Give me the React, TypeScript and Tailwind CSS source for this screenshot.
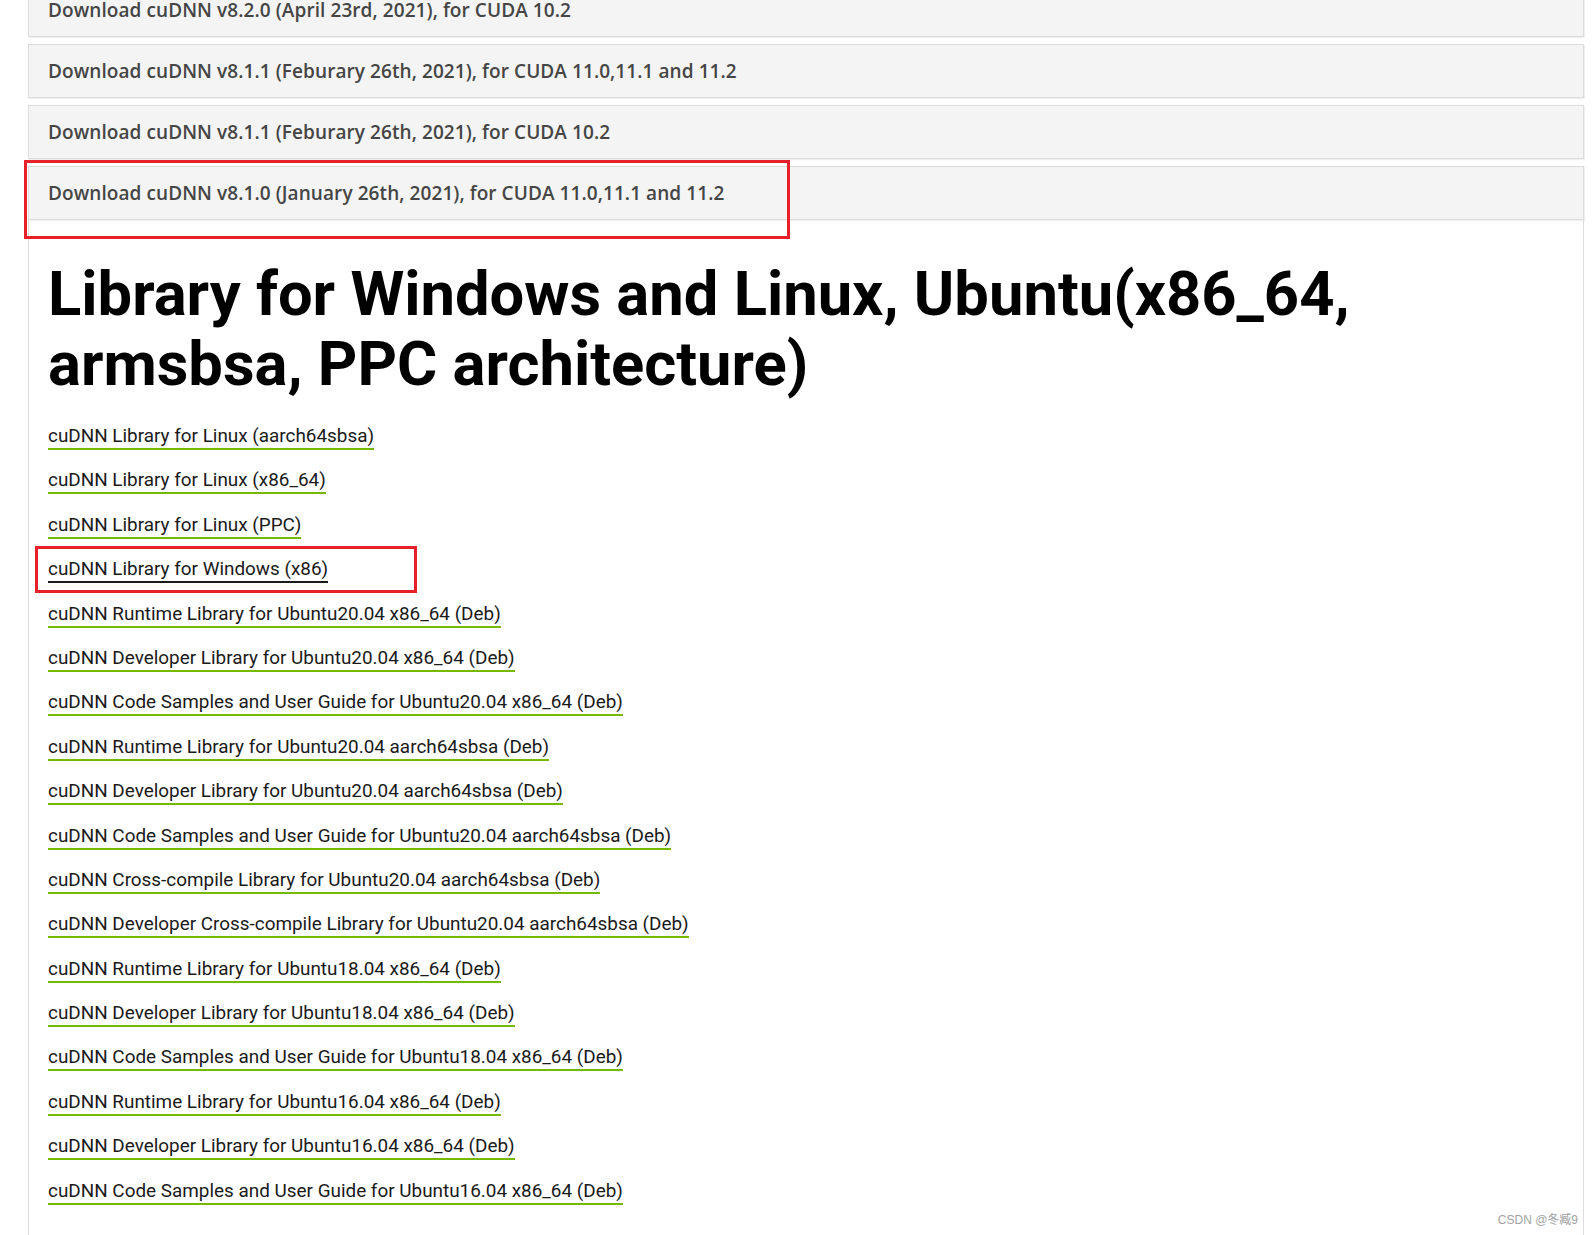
const releases = [
  "Download cuDNN v8.2.0 (April 23rd, 2021), for CUDA 10.2",
  "Download cuDNN v8.1.1 (Feburary 26th, 2021), for CUDA 11.0,11.1 and 11.2",
  "Download cuDNN v8.1.1 (Feburary 26th, 2021), for CUDA 10.2",
  "Download cuDNN v8.1.0 (January 26th, 2021), for CUDA 11.0,11.1 and 11.2",
];

const links = [
  "cuDNN Library for Linux (aarch64sbsa)",
  "cuDNN Library for Linux (x86_64)",
  "cuDNN Library for Linux (PPC)",
  "cuDNN Library for Windows (x86)",
  "cuDNN Runtime Library for Ubuntu20.04 x86_64 (Deb)",
  "cuDNN Developer Library for Ubuntu20.04 x86_64 (Deb)",
  "cuDNN Code Samples and User Guide for Ubuntu20.04 x86_64 (Deb)",
  "cuDNN Runtime Library for Ubuntu20.04 aarch64sbsa (Deb)",
  "cuDNN Developer Library for Ubuntu20.04 aarch64sbsa (Deb)",
  "cuDNN Code Samples and User Guide for Ubuntu20.04 aarch64sbsa (Deb)",
  "cuDNN Cross-compile Library for Ubuntu20.04 aarch64sbsa (Deb)",
  "cuDNN Developer Cross-compile Library for Ubuntu20.04 aarch64sbsa (Deb)",
  "cuDNN Runtime Library for Ubuntu18.04 x86_64 (Deb)",
  "cuDNN Developer Library for Ubuntu18.04 x86_64 (Deb)",
  "cuDNN Code Samples and User Guide for Ubuntu18.04 x86_64 (Deb)",
  "cuDNN Runtime Library for Ubuntu16.04 x86_64 (Deb)",
  "cuDNN Developer Library for Ubuntu16.04 x86_64 (Deb)",
  "cuDNN Code Samples and User Guide for Ubuntu16.04 x86_64 (Deb)",
];

export default function App() {
  return (
    <div className="relative h-[1235px] w-full overflow-hidden bg-white">
      <div className="ml-[28px] -mt-[17px] flex w-[1556px] flex-col">
        {/* Release accordion headers */}
        {releases.map((title, i) => (
          <div
            key={title}
            className={`flex h-[54px] items-center border border-[#dcdcdc] bg-[#f4f4f4] pl-[19px] shadow-[1px_1px_1px_rgba(0,0,0,0.06)] ${
              i < releases.length - 1 ? "mb-[7px]" : ""
            }`}
          >
            <span className="font-['Open_Sans',sans-serif] text-[19px] font-semibold tracking-[0.08px] text-[#454545]">
              {title}
            </span>
          </div>
        ))}

        {/* Expanded panel */}
        <div className="min-h-[1100px] border-x border-[#dcdcdc] pl-[19px] pt-[39px]">
          <h1 className="w-[1360px] font-['Roboto',sans-serif] text-[61.5px] leading-[70px] font-bold text-black">
            Library for Windows and Linux, Ubuntu(x86_64, armsbsa, PPC architecture)
          </h1>
          <ul className="mt-[26px] flex flex-col gap-[19.4px]">
            {links.map((label) => (
              <li key={label} className="flex">
                <a
                  href="#"
                  className={`block border-b-2 pb-[1px] font-['Roboto',sans-serif] text-[18.9px] leading-[22px] text-[#1a1a1a] ${
                    label === "cuDNN Library for Windows (x86)" ? "border-[#1a1a1a]" : "border-[#76b900]"
                  }`}
                >
                  {label}
                </a>
              </li>
            ))}
          </ul>
        </div>
      </div>

      {/* Annotation boxes */}
      <div className="pointer-events-none absolute left-[24px] top-[160px] h-[79px] w-[766px] border-[3px] border-[#e8202a]" />
      <div className="pointer-events-none absolute left-[35px] top-[546px] h-[47px] w-[382px] border-[3px] border-[#e8202a]" />

      {/* Watermark */}
      <div className="absolute bottom-[6px] right-[16px] font-['Liberation_Sans','Noto_Sans_CJK_SC',sans-serif] text-[12px] text-[#a3a3a3]">
        CSDN @冬臧9
      </div>
    </div>
  );
}
